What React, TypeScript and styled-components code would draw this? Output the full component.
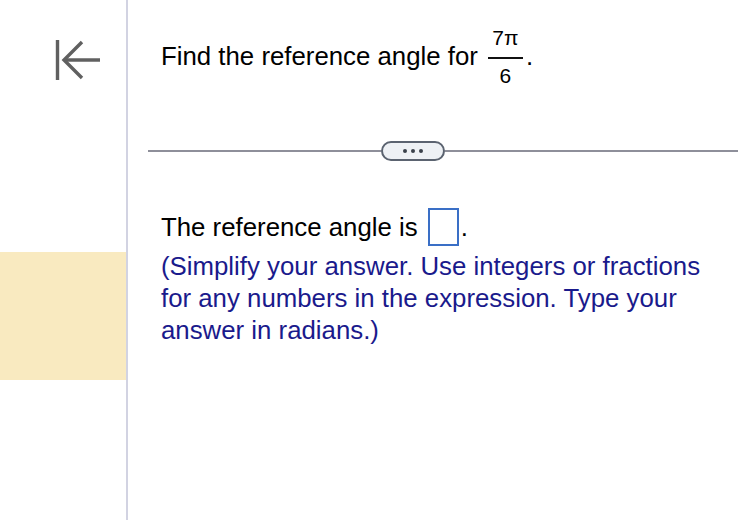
import React from "react";
import styled, { createGlobalStyle } from "styled-components";

const Global = createGlobalStyle`
  html, body { margin: 0; padding: 0; background: #ffffff; }
  body { font-family: "Liberation Sans", Arial, sans-serif; }
  #root { width: 749px; height: 520px; overflow: hidden; }
`;

const Page = styled.div`
  display: flex;
  width: 749px;
  height: 520px;
  background: #fff;
`;

const Sidebar = styled.aside`
  width: 126px;
  flex: 0 0 126px;
  border-right: 2px solid #d2d3e2;
  display: flex;
  flex-direction: column;
`;

const CollapseButton = styled.button`
  margin: 38px 0 0 52px;
  width: 52px;
  height: 44px;
  padding: 0;
  border: none;
  background: transparent;
  display: flex;
  align-items: center;
  justify-content: flex-start;
  cursor: pointer;
`;

const Highlight = styled.div`
  margin-top: 170px;
  height: 128px;
  background: #f9eac0;
`;

const Main = styled.main`
  flex: 1;
  display: flex;
  flex-direction: column;
`;

const Question = styled.div`
  padding: 27px 0 0 33px;
  font-size: 25.8px;
  color: #000;
  display: flex;
  align-items: flex-start;
`;

const Prompt = styled.span<{ $gap?: number }>`
  margin-top: 15px;
  margin-left: ${(p) => p.$gap ?? 0}px;
  line-height: normal;
`;

const Fraction = styled.span`
  display: inline-flex;
  flex-direction: column;
  align-items: center;
  margin-left: 10px;
  font-size: 21px;
  line-height: 21px;
`;

const Num = styled.span`
  padding: 0 3px 9px;
`;

const Den = styled.span`
  border-top: 2px solid #111;
  padding: 6px 3px 0;
  width: 35px;
  text-align: center;
  box-sizing: border-box;
`;

const DividerRow = styled.div`
  margin: 55px 11px 0 20px;
  height: 20px;
  display: flex;
  align-items: center;
`;

const Line = styled.div<{ $fixed?: number }>`
  flex: ${(p) => (p.$fixed ? `0 0 ${p.$fixed}px` : "1")};
  height: 2px;
  background: #8e8f9a;
`;

const MoreButton = styled.button`
  width: 64px;
  height: 20px;
  margin: 0;
  padding: 0;
  border: 2px solid #5b6370;
  border-radius: 10px;
  background: #eef1f5;
  display: flex;
  align-items: center;
  justify-content: center;
  gap: 4px;
  box-sizing: border-box;
`;

const Dot = styled.span`
  width: 4px;
  height: 4px;
  border-radius: 50%;
  background: #3a414b;
`;

const Answer = styled.div`
  padding: 46px 0 0 33px;
  font-size: 25.8px;
`;

const AnswerLine = styled.div`
  color: #000;
  display: flex;
  align-items: center;
  height: 40px;
`;

const Box = styled.span`
  display: inline-block;
  width: 31px;
  height: 38px;
  border: 2px solid #3a6fc6;
  box-sizing: border-box;
  margin-left: 10px;
  margin-right: 2px;
`;

const Hint = styled.div`
  margin-top: 3px;
  color: #1a1a8c;
  width: 560px;
  line-height: 32px;
`;

export default function App() {
  return (
    <>
      <Global />
      <Page>
        <Sidebar>
          <CollapseButton aria-label="Collapse">
            <svg width="48" height="44" viewBox="0 0 48 44" fill="none">
              <line x1="5.5" y1="2" x2="5.5" y2="42" stroke="#606060" strokeWidth="3.4" />
              <line x1="12" y1="22" x2="48" y2="22" stroke="#606060" strokeWidth="3.4" />
              <polyline points="30,4 12,22 30,40" stroke="#606060" strokeWidth="3.4" fill="none" />
            </svg>
          </CollapseButton>
          <Highlight />
        </Sidebar>
        <Main>
          <Question>
            <Prompt>Find the reference angle for</Prompt>
            <Fraction>
              <Num>7π</Num>
              <Den>6</Den>
            </Fraction>
            <Prompt $gap={3}>.</Prompt>
          </Question>
          <DividerRow>
            <Line $fixed={233} />
            <MoreButton aria-label="More">
              <Dot />
              <Dot />
              <Dot />
            </MoreButton>
            <Line />
          </DividerRow>
          <Answer>
            <AnswerLine>
              The reference angle is
              <Box />.
            </AnswerLine>
            <Hint>
              (Simplify your answer. Use integers or fractions for any numbers in the expression. Type your
              answer in radians.)
            </Hint>
          </Answer>
        </Main>
      </Page>
    </>
  );
}
